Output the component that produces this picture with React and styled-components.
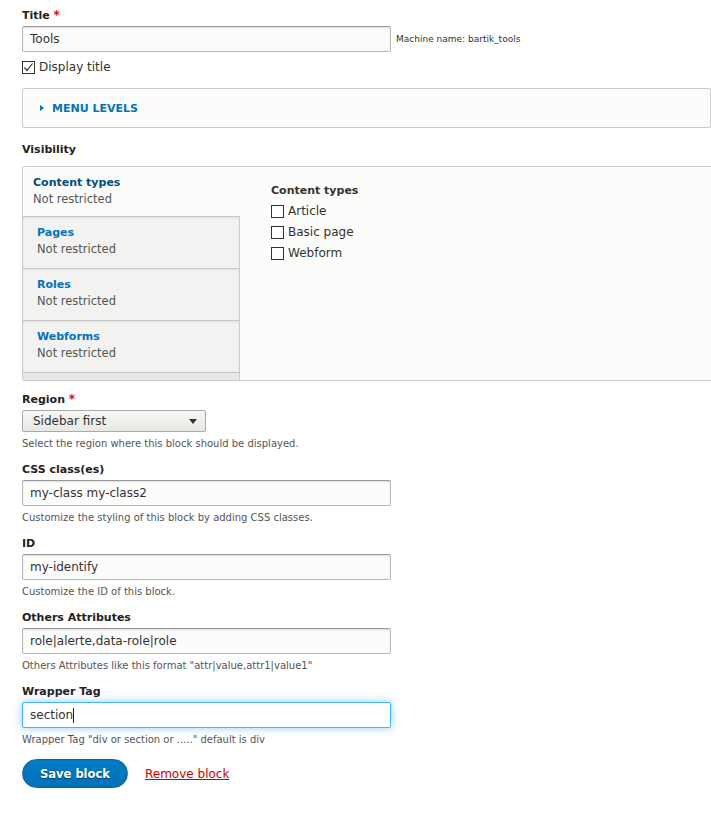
import React from "react";
import styled, { createGlobalStyle } from "styled-components";

const Global = createGlobalStyle`
  html, body { margin: 0; padding: 0; background: #fff; overflow: hidden; }
  body { font-family: "DejaVu Sans", Verdana, sans-serif; color: #333; font-size: 12px; }
`;

const Page = styled.div`
  padding: 8px 0 0 22px;
  width: 689px;
  overflow: hidden;
`;
const Item = styled.div`
  margin-bottom: ${p => p.$mb || 14}px;
`;
const Label = styled.div`
  font-weight: bold;
  font-size: 11px;
  color: #222;
  margin-bottom: ${p => p.$mb || 4}px;
`;
const Req = styled.span` color: #e00; font-size: 12px; `;
const Row = styled.div` display: flex; align-items: center; gap: 5px; `;
const Input = styled.div`
  box-sizing: border-box;
  width: 369px;
  height: 26px;
  border: 1px solid ${p => p.$focus ? "#40b6ff" : "#b8b8b8"};
  border-top-color: ${p => p.$focus ? "#40b6ff" : "#999"};
  border-radius: 2px;
  background: ${p => p.$focus ? "#fff" : "#fcfcfa"};
  box-shadow: ${p => p.$focus ? "0 0 8px rgba(80,170,255,0.6)" : "inset 0 1px 2px rgba(0,0,0,0.12)"};
  padding: 0 7px;
  display: flex;
  align-items: center;
  font-size: 12px;
  color: #333;
`;
const Caret = styled.span` display: inline-block; width: 1px; height: 15px; background: #222; `;
const Small = styled.span` font-size: 9px; color: #333; `;
const Desc = styled.div` font-size: 10px; color: #555; margin-top: 6px; `;
const Box = styled.span`
  box-sizing: border-box;
  width: 13px; height: 13px; border: 1px solid #333; background: #fff;
  display: inline-flex; align-items: center; justify-content: center; flex: none;
`;
const Check = styled.label`
  display: flex; align-items: center; gap: 4px; font-size: 12px; color: #333;
  margin-top: ${p => p.$mt || 0}px;
`;
const Details = styled.div`
  box-sizing: border-box;
  height: 40px; border: 1px solid #ccc; border-radius: 2px;
  background: #fcfcfa; display: flex; align-items: center; padding-left: 17px;
  font-weight: bold; font-size: 11px; color: #0074bd; gap: 8px; margin: 14px 0 15px;
`;
const Tri = styled.span`
  width: 0; height: 0; border-left: 4px solid #0074bd;
  border-top: 3px solid transparent; border-bottom: 3px solid transparent;
`;
const VTabs = styled.div`
  box-sizing: border-box;
  height: 215px; border: 1px solid #ccc; border-right: none; border-radius: 3px 0 0 3px; display: flex;
  background: #fcfcfa; overflow: hidden; margin-bottom: 11px;
`;
const TabCol = styled.div`
  width: 216px; flex: none; background: #e8e8e6; display: flex; flex-direction: column;
  border-right: 1px solid #ccc;
`;
const Tab = styled.div`
  box-sizing: border-box;
  height: ${p => p.$active ? 50 : 52}px;
  padding: ${p => p.$active ? "8px 10px" : "8px 14px"};
  background: ${p => p.$active ? "#fcfcfa" : "#f2f2f0"};
  border-bottom: 1px solid #c8c8c8;
  margin-right: ${p => p.$active ? -1 : 0}px;
  box-shadow: ${p => p.$active ? "none" : "inset 0 1px 2px rgba(0,0,0,0.08)"};
  font-size: 11.5px; line-height: 16px;
`;
const TabTitle = styled.div` font-weight: bold; font-size: 11px; color: ${p => p.$active ? "#004f80" : "#0074bd"}; `;
const TabSub = styled.div` color: #555; `;
const Pane = styled.div`
  padding: 17px 0 0 31px; display: flex; flex-direction: column; gap: 7px;
`;
const PaneTitle = styled.div` font-weight: bold; font-size: 11px; color: #333; `;
const Select = styled.div`
  box-sizing: border-box; width: 184px; height: 22px; border: 1px solid #aaa; border-radius: 2px;
  background: linear-gradient(#f6f6f3, #e8e8e4); display: flex; align-items: center;
  justify-content: space-between; padding: 0 8px 0 10px; font-size: 12px; color: #333;
`;
const Arrow = styled.span`
  width: 0; height: 0; border-top: 5px solid #333;
  border-left: 4px solid transparent; border-right: 4px solid transparent;
`;
const Actions = styled.div` display: flex; align-items: center; gap: 17px; margin-top: 8px; `;
const Button = styled.button`
  width: 106px; height: 29px; border-radius: 20px; border: 1px solid #1e5c90;
  background: linear-gradient(#007bc6, #0071b8); color: #fff; font-weight: bold;
  font-family: inherit; font-size: 11.5px; text-shadow: 0 1px 1px rgba(0,0,0,0.5);
`;
const Link = styled.a` color: #c00; text-decoration: underline; font-size: 12px; `;

const tabs = ["Pages", "Roles", "Webforms"];

export default function App() {
  return (
    <>
      <Global />
      <Page>
        <Item $mb={8}>
          <Label>Title <Req>*</Req></Label>
          <Row>
            <Input>Tools</Input>
            <Small>Machine name: bartik_tools</Small>
          </Row>
        </Item>
        <Check $mt={3}>
          <Box>
            <svg width="11" height="11" viewBox="0 0 11 11"><path d="M1.5 5.5 L4 8.5 L9.5 1.5" fill="none" stroke="#333" strokeWidth="1.2" /></svg>
          </Box>
          Display title
        </Check>
        <Details><Tri />MENU LEVELS</Details>
        <Label $mb={10}>Visibility</Label>
        <VTabs>
          <TabCol>
            <Tab $active>
              <TabTitle $active>Content types</TabTitle>
              <TabSub>Not restricted</TabSub>
            </Tab>
            {tabs.map(t => (
              <Tab key={t}>
                <TabTitle>{t}</TabTitle>
                <TabSub>Not restricted</TabSub>
              </Tab>
            ))}
          </TabCol>
          <Pane>
            <PaneTitle>Content types</PaneTitle>
            {["Article", "Basic page", "Webform"].map(c => (
              <Check key={c}><Box />{c}</Check>
            ))}
          </Pane>
        </VTabs>
        <Item>
          <Label>Region <Req>*</Req></Label>
          <Select>Sidebar first<Arrow /></Select>
          <Desc>Select the region where this block should be displayed.</Desc>
        </Item>
        <Item>
          <Label>CSS class(es)</Label>
          <Input>my-class my-class2</Input>
          <Desc>Customize the styling of this block by adding CSS classes.</Desc>
        </Item>
        <Item>
          <Label>ID</Label>
          <Input>my-identify</Input>
          <Desc>Customize the ID of this block.</Desc>
        </Item>
        <Item>
          <Label>Others Attributes</Label>
          <Input>role|alerte,data-role|role</Input>
          <Desc>Others Attributes like this format "attr|value,attr1|value1"</Desc>
        </Item>
        <Item>
          <Label>Wrapper Tag</Label>
          <Input $focus>section<Caret /></Input>
          <Desc>Wrapper Tag "div or section or ....." default is div</Desc>
        </Item>
        <Actions>
          <Button>Save block</Button>
          <Link>Remove block</Link>
        </Actions>
      </Page>
    </>
  );
}
